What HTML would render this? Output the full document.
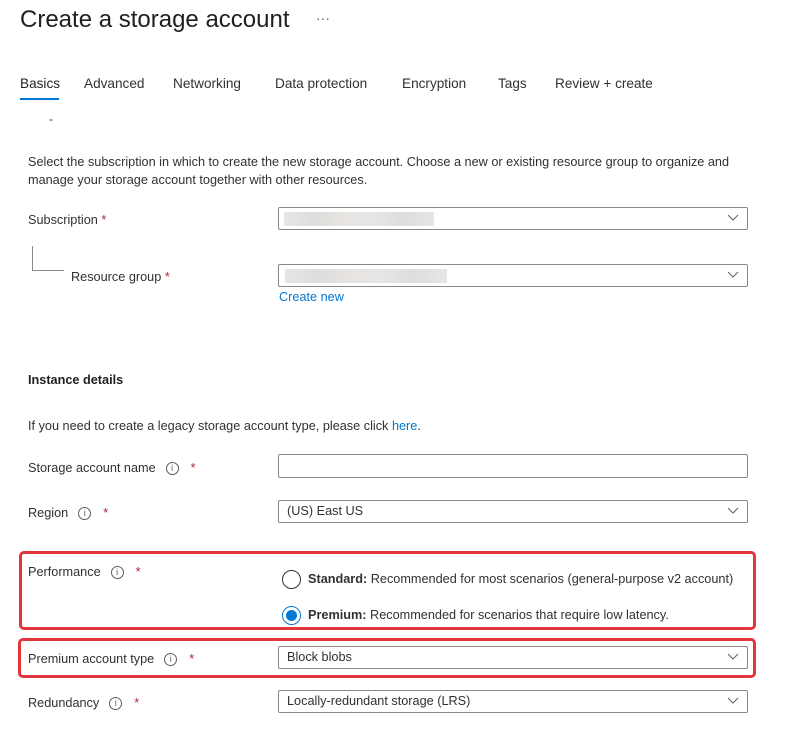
<!DOCTYPE html><html><head><style>
body{margin:0;width:792px;height:745px;background:#fff;font-family:"Liberation Sans",sans-serif;color:#323130;position:relative;overflow:hidden}
.a{position:absolute;white-space:nowrap}
.t{font-size:12.7px}
.inp{position:absolute;left:278px;width:470px;height:23px;border:1px solid #8a8886;border-radius:2px;background:#fff;font-size:12.7px;line-height:21px;padding-left:8px;box-sizing:border-box}
.chev{position:absolute;right:8px;top:6px;width:12px;height:8px}
.req{color:#a4262c}
.info{display:inline-block;width:11px;height:11px;border:1px solid #605e5c;border-radius:50%;font-size:9px;line-height:11px;text-align:center;color:#605e5c;vertical-align:1px;margin:0 12px 0 10px}
.red{position:absolute;border:3px solid #e3353c;border-radius:5px}
.blur{position:absolute;top:4px;height:14px;background:linear-gradient(90deg,#e6e6e6,#ddd,#e8e4e0,#e4e6e8,#ddd,#e6e6e6)}
.tab{position:absolute;top:76px;font-size:13.6px;white-space:nowrap}
</style></head><body>
<div class="a" style="left:20px;top:6px;font-size:24px;color:#201f1e">Create a storage account</div>
<div class="a" style="left:316px;top:10px;font-size:14px;color:#605e5c">···</div>
<div class="tab" style="left:20px;color:#201f1e">Basics</div>
<div class="a" style="left:20px;top:98px;width:39px;height:2px;background:#0078d4"></div>
<div class="tab" style="left:84px">Advanced</div>
<div class="tab" style="left:173px">Networking</div>
<div class="tab" style="left:275px">Data protection</div>
<div class="tab" style="left:402px">Encryption</div>
<div class="tab" style="left:498px">Tags</div>
<div class="tab" style="left:555px">Review + create</div>
<div class="a" style="left:49px;top:112px;font-size:12px">-</div>
<div class="a t" style="left:28px;top:153px;line-height:18px">Select the subscription in which to create the new storage account. Choose a new or existing resource group to organize and<br>manage your storage account together with other resources.</div>
<div class="a t" style="left:28px;top:213px">Subscription <span class="req">*</span></div>
<div class="inp" style="top:207px"><div class="blur" style="left:5px;width:150px"></div><svg class="chev" viewBox="0 0 12 8"><path d="M1 1l5 5 5-5" fill="none" stroke="#605e5c" stroke-width="1"/></svg></div>
<div class="a" style="left:32px;top:246px;width:1px;height:24px;background:#8a8886"></div>
<div class="a" style="left:32px;top:270px;width:32px;height:1px;background:#8a8886"></div>
<div class="a t" style="left:71px;top:270px">Resource group <span class="req">*</span></div>
<div class="inp" style="top:264px"><div class="blur" style="left:6px;width:162px"></div><svg class="chev" viewBox="0 0 12 8"><path d="M1 1l5 5 5-5" fill="none" stroke="#605e5c" stroke-width="1"/></svg></div>
<div class="a t" style="left:279px;top:290px;color:#0078d4">Create new</div>
<div class="a t" style="left:28px;top:373px;font-weight:bold;color:#201f1e">Instance details</div>
<div class="a t" style="left:28px;top:419px">If you need to create a legacy storage account type, please click <span style="color:#0078d4">here</span>.</div>
<div class="a t" style="left:28px;top:461px">Storage account name<span class="info">i</span><span class="req">*</span></div>
<div class="inp" style="top:454px;height:24px"></div>
<div class="a t" style="left:28px;top:506px">Region<span class="info">i</span><span class="req">*</span></div>
<div class="inp" style="top:500px">(US) East US<svg class="chev" viewBox="0 0 12 8"><path d="M1 1l5 5 5-5" fill="none" stroke="#605e5c" stroke-width="1"/></svg></div>
<div class="red" style="left:19px;top:551px;width:731px;height:73px"></div>
<div class="a t" style="left:28px;top:565px">Performance<span class="info">i</span><span class="req">*</span></div>
<div class="a" style="left:282px;top:570px;width:17px;height:17px;border:1px solid #323130;border-radius:50%"></div>
<div class="a t" style="left:308px;top:572px"><b>Standard:</b> Recommended for most scenarios (general-purpose v2 account)</div>
<div class="a" style="left:282px;top:606px;width:17px;height:17px;border:1px solid #0078d4;border-radius:50%"></div>
<div class="a" style="left:286px;top:610px;width:11px;height:11px;background:#0078d4;border-radius:50%"></div>
<div class="a t" style="left:308px;top:608px"><b>Premium:</b> Recommended for scenarios that require low latency.</div>
<div class="red" style="left:18px;top:638px;width:732px;height:34px"></div>
<div class="a t" style="left:28px;top:652px">Premium account type<span class="info">i</span><span class="req">*</span></div>
<div class="inp" style="top:646px">Block blobs<svg class="chev" viewBox="0 0 12 8"><path d="M1 1l5 5 5-5" fill="none" stroke="#605e5c" stroke-width="1"/></svg></div>
<div class="a t" style="left:28px;top:696px">Redundancy<span class="info">i</span><span class="req">*</span></div>
<div class="inp" style="top:690px">Locally-redundant storage (LRS)<svg class="chev" viewBox="0 0 12 8"><path d="M1 1l5 5 5-5" fill="none" stroke="#605e5c" stroke-width="1"/></svg></div>
</body></html>
